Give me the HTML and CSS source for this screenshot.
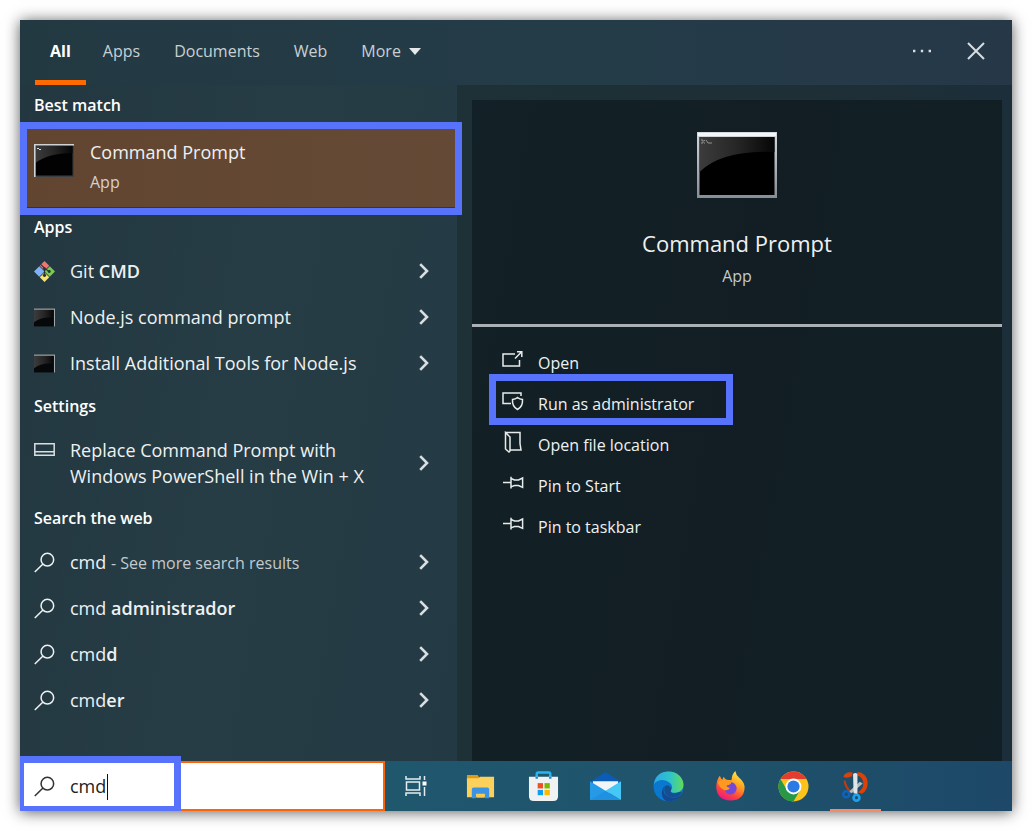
FILE: index.html
```html
<!DOCTYPE html>
<html lang="en">
<head>
  <meta charset="UTF-8" />
  <meta name="viewport" content="width=device-width, initial-scale=1.0"/>
  <title>Windows Search - cmd</title>
  <link rel="stylesheet" href="styles.css">
</head>
<body>
  <!-- Shared icons -->
  <svg class="sprite" width="0" height="0" aria-hidden="true">
    <defs>
      <linearGradient id="gloss" x1="0" y1="0" x2="1" y2="0"><stop offset="0" stop-color="#3c3c3c"/><stop offset="0.5" stop-color="#262626"/><stop offset="1" stop-color="#060606"/></linearGradient>
      <linearGradient id="frame" x1="0" y1="0" x2="0" y2="1"><stop offset="0" stop-color="#d5d9de"/><stop offset="1" stop-color="#858d98"/></linearGradient>
      <symbol id="chevron" viewBox="0 0 10 16"><path d="M1.2 1.2 8 8l-6.8 6.8" fill="none" stroke="#d9dee0" stroke-width="2.6"/></symbol>
      <symbol id="search" viewBox="0 0 22 22"><circle cx="14" cy="8" r="6.6" fill="none" stroke="currentColor" stroke-width="1.6"/><path d="M9.4 12.6.8 21" stroke="currentColor" stroke-width="1.6"/></symbol>
      <symbol id="console" viewBox="0 0 20 17"><path d="M0 0h20v17H0z" fill="#06080a"/><path d="M0 1h19v8Q8 7 0 13z" fill="url(#gloss)"/><path d="M0 .5h19.5V17" fill="none" stroke="#9fa9ad"/></symbol>
      <symbol id="pin" viewBox="0 0 22 14"><path d="M1 6.5h7.500M9 .8v11.600M9.500 2.800l3 1.200h4L20.600 2v9.400l-4.100-1.900h-4l-3 1.100" fill="none" stroke="#e8ebec" stroke-width="1.5"/></symbol>
    </defs>
  </svg>

  <main class="window">
    <header class="topbar">
      <nav class="tabs">
        <button class="tab active">All</button>
        <button class="tab">Apps</button>
        <button class="tab">Documents</button>
        <button class="tab">Web</button>
        <button class="tab">More <svg class="caret" viewBox="0 0 12 7"><path d="M0 0h12L6 7z" fill="#e6e9ea"/></svg></button>
      </nav>
      <div class="window-tools">
        <button class="tool" aria-label="Options"><svg width="20" height="4" viewBox="0 0 20 4"><path d="M1 .8h2.400V3.200H1zM8.800.8h2.400v2.400H8.800zM16.600.8H19v2.400h-2.400z" fill="#d7dde0"/></svg></button>
        <button class="tool" aria-label="Close"><svg width="18" height="18" viewBox="0 0 18 18"><path d="m1 1 16 16M17 1 1 17" stroke="#d7dde0" stroke-width="2"/></svg></button>
      </div>
    </header>

    <div class="content">
      <!-- Results -->
      <section class="results">
        <h2>Best match</h2>
        <button class="best marked">
          <svg class="best-icon" viewBox="0 0 40 33"><path d="M0 0h40v33H0z" fill="#3b4045"/><path d="M1.500 1.500h37v30h-37z" fill="#020202"/><path d="M1.500 2h37v7Q14 9 1.500 19z" fill="url(#gloss)"/><path d="M.8 33V.8H40" fill="none" stroke="#cfd3d6" stroke-width="1.600"/><path d="M3 4.500h2M5 5.500h2" stroke="#ddd"/></svg>
          <span class="best-text"><span class="best-title">Command Prompt</span><span class="sub">App</span></span>
        </button>

        <h2>Apps</h2>
        <button class="row">
          <svg class="icon" viewBox="0 0 22 22"><path d="M11 0 16 5 11 10 6 5z" fill="#f07575"/><path d="m16.500 5.500 5.500 5.500-5.500 5.500L11 11z" fill="#78cc4c"/><path d="M5.500 5.500 11 11l-5.500 5.500L0 11z" fill="#7db2fa"/><path d="m11 12 5 5-5 5-5-5z" fill="#fae26c"/><path d="m7 3.500 4.500 4.500M11 7.500V15M12 8l4 3.500" stroke="#26343a" stroke-width="1.200"/><circle cx="11" cy="8" r="1.500" fill="#26343a"/><circle cx="11" cy="15" r="1.700" fill="#26343a"/><circle cx="16" cy="11" r="1.500" fill="#26343a"/></svg>
          <span class="label">Git <b>CMD</b></span>
          <svg class="chevron"><use href="#chevron"/></svg>
        </button>
        <button class="row">
          <svg class="icon"><use href="#console"/></svg>
          <span class="label">Node.js command prompt</span>
          <svg class="chevron"><use href="#chevron"/></svg>
        </button>
        <button class="row">
          <svg class="icon"><use href="#console"/></svg>
          <span class="label">Install Additional Tools for Node.js</span>
          <svg class="chevron"><use href="#chevron"/></svg>
        </button>

        <h2>Settings</h2>
        <button class="row tall">
          <svg class="icon" viewBox="0 0 21 21"><path d="M.8 4.800h19.400v11.400H.8zM.8 12.800h19.400" fill="none" stroke="#d9dee0" stroke-width="1.500"/></svg>
          <span class="label">Replace Command Prompt with<br>Windows PowerShell in the Win + X</span>
          <svg class="chevron"><use href="#chevron"/></svg>
        </button>

        <h2>Search the web</h2>
        <button class="row">
          <svg class="icon"><use href="#search"/></svg>
          <span class="label">cmd <span class="sub">- See more search results</span></span>
          <svg class="chevron"><use href="#chevron"/></svg>
        </button>
        <button class="row">
          <svg class="icon"><use href="#search"/></svg>
          <span class="label">cmd <b>administrador</b></span>
          <svg class="chevron"><use href="#chevron"/></svg>
        </button>
        <button class="row">
          <svg class="icon"><use href="#search"/></svg>
          <span class="label">cmd<b>d</b></span>
          <svg class="chevron"><use href="#chevron"/></svg>
        </button>
        <button class="row">
          <svg class="icon"><use href="#search"/></svg>
          <span class="label">cmd<b>er</b></span>
          <svg class="chevron"><use href="#chevron"/></svg>
        </button>
      </section>

      <!-- Details of the selected app -->
      <section class="details">
        <div class="card">
          <div class="hero">
            <svg class="hero-icon" viewBox="0 0 80 66"><path d="M0 0h80v66H0z" fill="url(#frame)"/><path d="M1 1h78v3H1z" fill="#f4f6fa"/><path d="M2.500 5h75v58h-75z" fill="#000"/><path d="M2.500 5h75v15Q25 18 2.500 40z" fill="url(#gloss)"/><path d="M4 8h2v3H4M7.500 8v1M7.500 10.500v1M9 8l2 3h4" fill="none" stroke="#aaa" stroke-width=".8"/></svg>
            <h1>Command Prompt</h1>
            <p class="sub">App</p>
          </div>
          <div class="actions">
            <button class="action"><svg viewBox="0 0 22 22"><path d="M13 5H1v12h16.500v-6M13 9.500l6.500-6.500M15 2.800h4.800V8" fill="none" stroke="#e8ebec" stroke-width="1.500"/></svg>Open</button>
            <button class="action marked"><svg viewBox="0 0 22 22"><path d="M19 6V3H1v10.500h8" fill="none" stroke="#e8ebec" stroke-width="1.500"/><path d="M10.500 9.500q2.800-.2 5-2 2.200 1.800 5 2 .5 7-5 10-5.500-3-5-10z" fill="none" stroke="#e8ebec" stroke-width="1.500"/></svg>Run as administrator</button>
            <button class="action"><svg viewBox="0 0 22 22"><path d="M3.500 1.500H18v11l1 6.500H8.500M3.500 1.500v16.500l3.500 3 1-1V6z" fill="none" stroke="#e8ebec" stroke-width="1.500"/></svg>Open file location</button>
            <button class="action"><svg><use href="#pin"/></svg>Pin to Start</button>
            <button class="action"><svg><use href="#pin"/></svg>Pin to taskbar</button>
          </div>
        </div>
      </section>
    </div>

    <!-- Taskbar -->
    <footer class="taskbar">
      <label class="search-box">
        <svg class="icon"><use href="#search"/></svg>
        <input type="text" value="cmd" aria-label="Type here to search">
        <span class="cursor"></span>
      </label>
      <button class="task-view" aria-label="Task View"><svg width="22" height="22" viewBox="0 0 22 22"><path d="M1 1v3h14V1M1 21v-3h14v3M1.500 7h13v8h-13z" fill="none" stroke="#e3edf1" stroke-width="1.500"/><path d="M19.500 1v4M19.500 12v9" stroke="#e3edf1" stroke-width="1.500"/><path d="M17.500 6.500h4v4h-4z" fill="#fff"/></svg></button>
      <div class="pinned">
        <button class="task" aria-label="File Explorer"><svg viewBox="0 0 32 32"><path d="M2 4h11l2 3v4H2z" fill="#e09a10"/><path d="M2 7.500h12l1.500-1.500H30v21H2z" fill="#fbd15c"/><path d="M7 28V19q0-2 2-2h14q2 0 2 2v9h-4.500v-4.500h-9V28z" fill="#3b93e3"/><path d="M12 24h8v3.500h-8z" fill="#fbc94a"/></svg></button>
        <button class="task" aria-label="Microsoft Store"><svg viewBox="0 0 32 32"><path d="M9 9V3q0-1.500 1.500-1.500h11Q23 1.500 23 3v6" fill="none" stroke="#29b6f0" stroke-width="2.500"/><path d="M1 6h30v20q0 5-5 5H6q-5 0-5-5z" fill="#f0f1f2"/><path d="M9 8V6M23 8V6" stroke="#188cc0" stroke-width="2.500"/><path d="M10 12.500h5.500V18H10z" fill="#f04e23"/><path d="M17 12.500h5.500V18H17z" fill="#7db700"/><path d="M10 19.500h5.500V25H10z" fill="#0a9ff0"/><path d="M17 19.500h5.500V25H17z" fill="#fdb800"/></svg></button>
        <button class="task" aria-label="Mail"><svg viewBox="0 0 32 32"><path d="M0 11 16 1l16 10v6H0z" fill="#0c5cb5"/><path d="M3 10.500h26V19l-13 5L3 19z" fill="#f2f5f8"/><path d="m0 10.500 16 10L32 30H0z" fill="#259be8"/><path d="M32 10.500v19.500L16 20.500z" fill="#45c8f5"/><path d="M0 30h32L16 20.500z" fill="#1f91e0"/></svg></button>
        <button class="task" aria-label="Edge"><svg viewBox="0 0 32 32">
          <defs><linearGradient id="edge1" x1="0" x2="1"><stop offset="0" stop-color="#2aa8e8"/><stop offset="0.55" stop-color="#2fc4c8"/><stop offset="1" stop-color="#62dc55"/></linearGradient></defs>
          <circle cx="16" cy="16" r="15.500" fill="#0b78d0"/><path d="M.8 14C2 5 8 .5 16 .5c9 0 15.500 6.500 15.500 13.500 0 5.500-4 8.500-8.500 8.500-3.500 0-5-1.200-4.500-2.500 2-2 1.500-5.500-1-7.500C12 7.500 3.500 9 .8 14z" fill="url(#edge1)"/><path d="M12.500 15.500c-4 5 0 12 8 12 3.500 0 6.500-1.200 9-3.500-3 5-8.500 7.500-13.500 7.500C8 30.500 7 19 12.500 15.500z" fill="#114a92"/><path d="M18.500 20c-1.500 2.500 3 4 8 2 2-.7 3.500 0 3 1-3 4-8 5-12 4-5-1.500-7.500-7-5-11.500 2.500-2.500 7.500 1 6 4.500z" fill="#164f8f"/></svg></button>
        <button class="task" aria-label="Firefox"><svg viewBox="0 0 32 32">
          <defs><linearGradient id="fox" x1="0.8" y1="0" x2="0.3" y2="1"><stop offset="0" stop-color="#fff14a"/><stop offset="0.4" stop-color="#ffa21e"/><stop offset="0.75" stop-color="#ff4040"/><stop offset="1" stop-color="#e8178a"/></linearGradient></defs>
          <path d="M5 5q1 3 2.500 4L9 6q.8 2 3 3l5 .5Q17.500 3 21 0q.5 4 4 7 6 5 5.500 11-1 12-14.500 12.500Q2 30 1.300 17 1.500 9 5 5z" fill="url(#fox)"/><path d="M10 13q5-4 10 0 4 4 1 9-4 4-9 1-4-4-2-10z" fill="#7448d8"/><path d="M3 11q5-3 9-1l5 1q0 3-5 4 0 2 3.500 2.500-2 3-6 2Q4 17 3 11z" fill="#ff9a20"/></svg></button>
        <button class="task" aria-label="Chrome"><svg viewBox="0 0 32 32"><circle cx="16" cy="16" r="15.500" fill="#fcc31b"/><path d="M2.600 8.200A15.500 15.500 0 0 1 29.400 8.200H16z" fill="#e53c30"/><path d="M2.600 8.200A15.500 15.500 0 0 0 16 31.500l6.700-11.600L16 16 9.300 19.900z" fill="#279847"/><circle cx="16" cy="16" r="8.200" fill="#fff"/><circle cx="16" cy="16" r="6.300" fill="#2c7be5"/></svg></button>
        <button class="task running" aria-label="Snip"><svg viewBox="0 0 32 32"><path d="M13 1.500Q5 .5 3.500 6q3 2 9-.5zM18 1q9 .5 10.500 10 .5 9-6 12.500l-4-1.500q6-4 5.500-10Q23 6 18 5z" fill="#da420a"/><path d="M4.800 10q.5 6 5.500 11" fill="none" stroke="#c63a08" stroke-width="2.200"/><path d="M9 21.500 20.500 11l3 2L12 23z" fill="#b4b9be"/><path d="M13.500 3q2.500-2 4.500 0v21l-4-1z" fill="#e2e5e8"/><circle cx="6.500" cy="24" r="3.200" fill="none" stroke="#0d63bd" stroke-width="2.600"/><circle cx="17" cy="27.500" r="3" fill="none" stroke="#1ba1ee" stroke-width="2.800"/></svg></button>
      </div>
    </footer>
  </main>
</body>
</html>
```

FILE: styles.css
```css
*, *::before, *::after { box-sizing: border-box; }
body { margin: 0; padding: 20px; background: #fff; font-family: "Open Sans", "Noto Sans", sans-serif; font-size: 18px; color: #eef1f2; }
button { font: inherit; color: inherit; background: none; border: none; padding: 0; text-align: left; cursor: pointer; }
h1, h2, p { margin: 0; }
svg { flex: none; display: block; }
b { font-weight: 600; }
.sprite { position: absolute; }
.sub { font-size: 16px; color: #c3cacd; }

.window { box-shadow: 0 1px 14px rgba(0,0,0,0.65); background: #243a43; }

/* Top bar */
.topbar { height: 65px; display: flex; justify-content: space-between; background: linear-gradient(90deg, #233942, #243c48 50%, #263848); }
.tabs { display: flex; padding-left: 15px; }
.tab { display: flex; align-items: center; gap: 8px; padding: 2px 17px 0; font-size: 16px; color: #c9d0d3; border-bottom: 5px solid transparent; }
.tab.active { color: #fff; font-weight: 700; padding: 2px 15px 0; border-bottom-color: #ff6a00; }
.caret { width: 12px; height: 7px; }
.window-tools { display: flex; align-items: center; gap: 35px; padding: 0 27px 4px 0; }

/* Results */
.content { display: grid; grid-template-columns: 437px 1fr; }
.results { padding-bottom: 38px; background: linear-gradient(100deg, #22373f, #273d45 50%, #233944); }
.results h2 { padding-left: 14px; font-size: 16px; line-height: 41px; font-weight: 600; color: #fff; }
.best { position: relative; width: 100%; height: 81px; padding: 0 14px; display: flex; align-items: center; gap: 16px; background: linear-gradient(90deg, #624531, #644a36); }
.best-icon { width: 40px; height: 33px; margin-bottom: 12px; }
.best-text { display: flex; flex-direction: column; line-height: 30px; }
.best-text .sub { color: #d8d0cb; }
.row { width: 100%; height: 46px; padding: 0 28px 0 14px; display: flex; align-items: center; gap: 15px; }
.row.tall { height: 71px; }
.row.tall .icon { margin-bottom: 26px; }
.icon { width: 21px; height: 21px; }
.label { flex: 1; line-height: 26px; white-space: nowrap; }
.chevron { width: 10px; height: 16px; }

/* Blue marker frames */
.marked::after { content: ""; position: absolute; z-index: 1; border: 7px solid #5873fb; }
.best.marked::after { inset: -4px -5px -8px 0; }

/* Details */
.details { display: flex; padding: 15px 10px 0 15px; background: linear-gradient(90deg, #1d3137, #1e2f35 60%, #1c2e3a); }
.card { flex: 1; background: linear-gradient(100deg, #122127, #121e24 50%, #112026); }
.hero { height: 227px; padding-top: 32px; text-align: center; border-bottom: 3px solid #aab1b4; }
.hero-icon { width: 80px; height: 66px; margin: 0 auto 27px; }
.hero h1 { font-size: 22px; line-height: 36px; font-weight: 400; }
.hero .sub { line-height: 30px; }
.actions { padding: 15px 30px; font-size: 16px; }
.action { position: relative; display: flex; align-items: center; gap: 14px; height: 41px; }
.action svg { width: 22px; height: 22px; margin-bottom: 6px; }
.action.marked::after { inset: -9px -39px -1px -13px; }

/* Taskbar */
.taskbar { height: 50px; display: flex; background: linear-gradient(90deg, #20586e 30%, #1f546c 65%, #1d4868); }
.search-box { position: relative; flex: 0 0 365px; display: flex; align-items: center; gap: 15px; padding-left: 12px; background: #fff; border: 2px solid #fb6408; color: #333; }
.search-box::after { content: ""; position: absolute; left: -2px; top: -7px; width: 161px; height: 55px; border: 7px solid #5873fb; border-left-width: 4px; border-bottom-width: 5px; pointer-events: none; }
.search-box input { flex: 1; width: 100%; padding: 0; border: none; outline: none; background: none; font: inherit; color: #222; }
.cursor { position: absolute; left: 85px; top: 11px; width: 1px; height: 26px; background: #111; }
.task-view { width: 62px; display: grid; place-items: center; }
.pinned { flex: 0 1 426px; margin-left: 8px; display: flex; justify-content: space-between; }
.task { width: 51px; padding-top: 2px; display: grid; place-items: center; border-bottom: 2px solid transparent; }
.task svg { width: 31px; height: 31px; }
.task.running { border-bottom-color: #f58a68; }
```
